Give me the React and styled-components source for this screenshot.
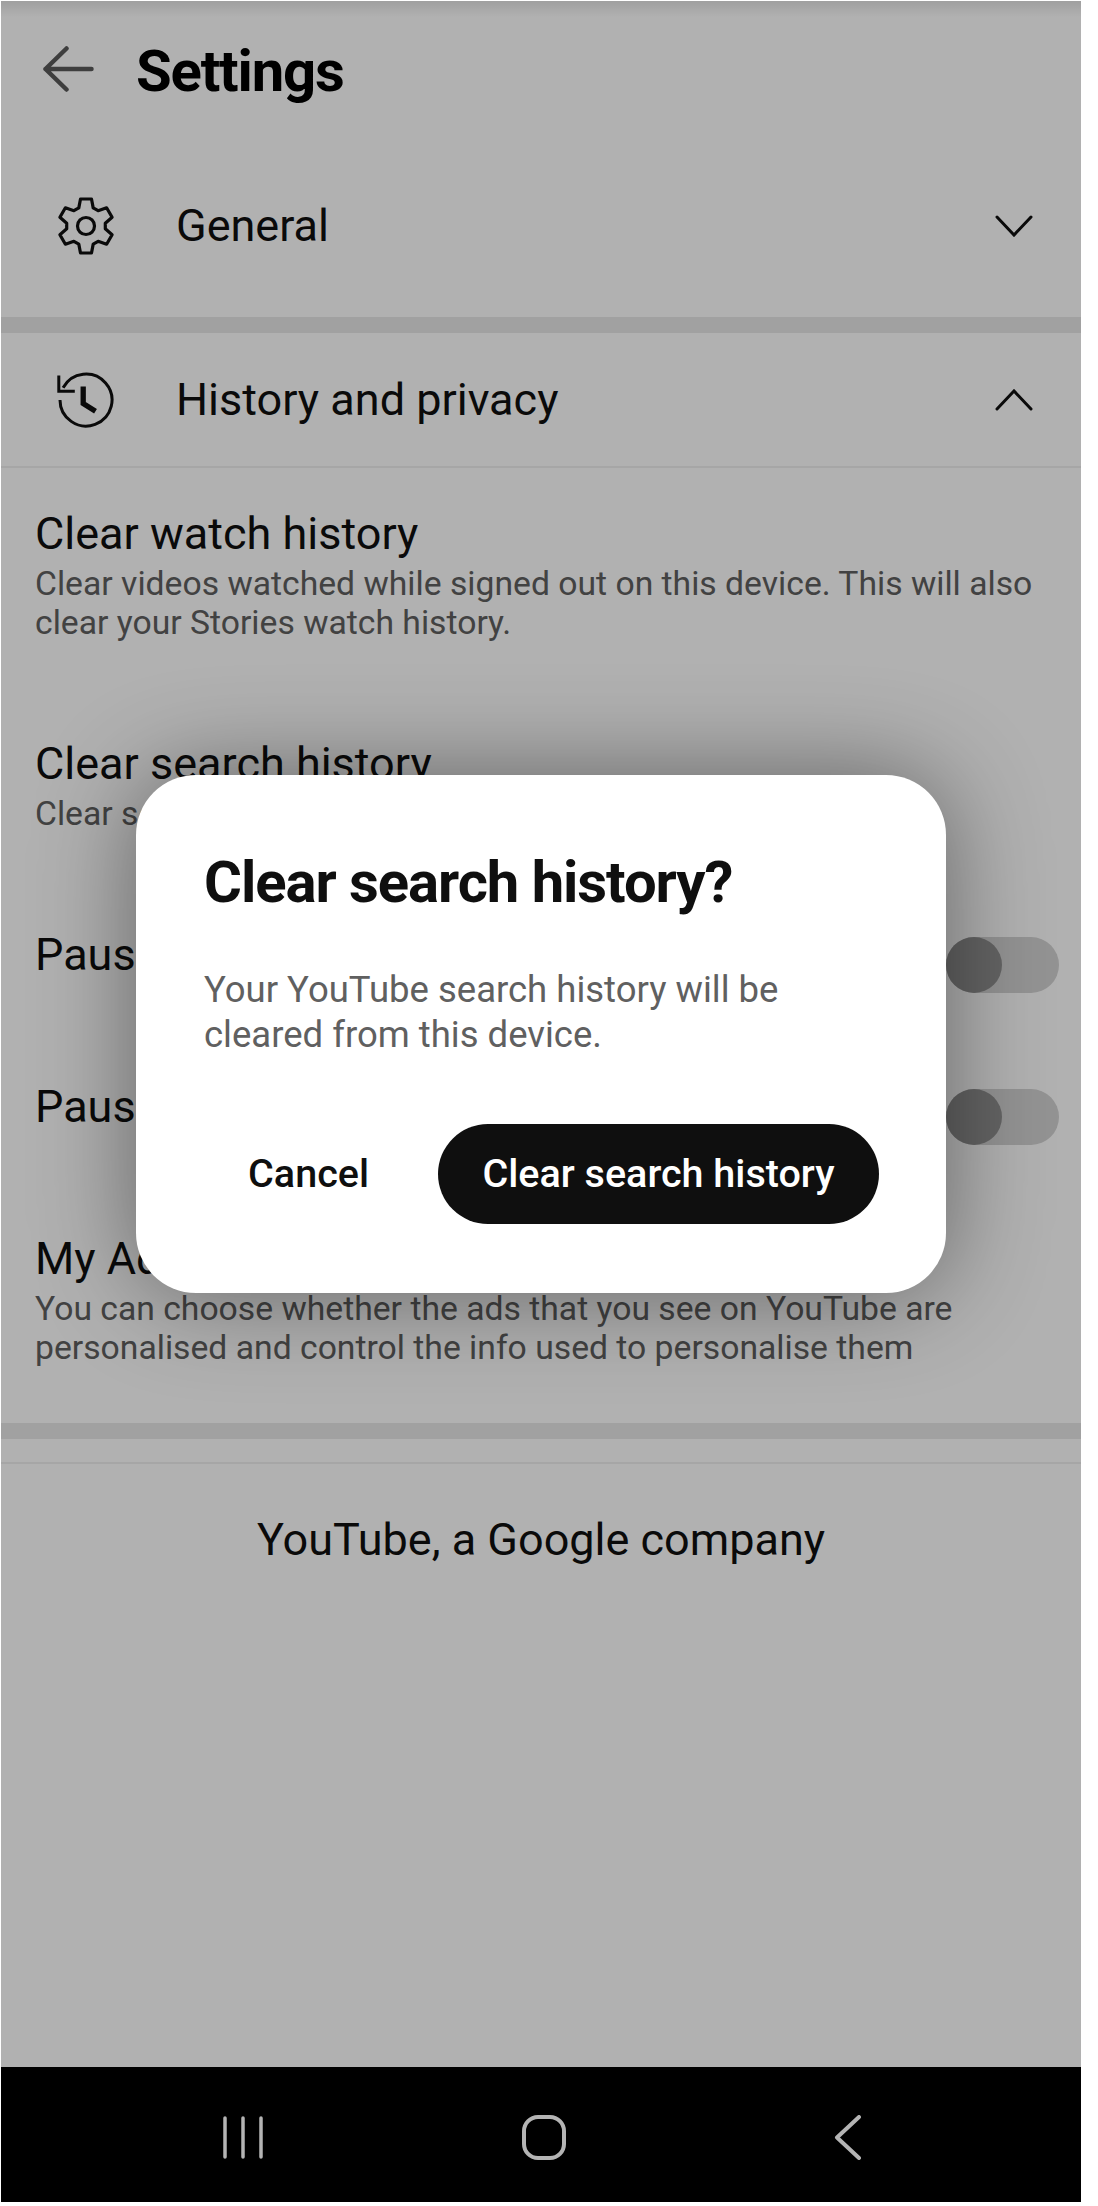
import React from "react";
import styled, { createGlobalStyle } from "styled-components";

const GlobalStyle = createGlobalStyle`
  html, body {
    margin: 0;
    padding: 0;
    background: #fff;
    font-family: Roboto, "Liberation Sans", sans-serif;
  }
`;

const Screen = styled.div`
  position: relative;
  width: 1080px;
  height: 2201px;
  margin: 1px 0 0 1px;
  background: #fff;
  display: flex;
  flex-direction: column;
  overflow: hidden;
  color: #0f0f0f;
`;

const Content = styled.div`
  flex: 1;
  position: relative;
  display: flex;
  flex-direction: column;
`;

const Header = styled.header`
  height: 157px;
  flex: none;
  display: flex;
  align-items: flex-start;
  padding-left: 42px;
  box-sizing: border-box;
`;

const BackButton = styled.div`
  width: 93px;
  padding-top: 45px;
  flex: none;
  line-height: 0;
`;

const PageTitle = styled.h1`
  margin: 0;
  padding-top: 34px;
  font-size: 58px;
  line-height: 72px;
  font-weight: 700;
  letter-spacing: -1.2px;
  color: #000;
`;

const Section = styled.div`
  height: 135px;
  flex: none;
  display: flex;
  align-items: center;
  padding: 0 48px 0 55px;
  box-sizing: border-box;
  margin-bottom: ${props => (props.$gap ? "24px" : "0")};
  border-bottom: ${props => (props.$line ? "2px solid #f0f0f0" : "none")};
`;

const SectionIcon = styled.div`
  width: 120px;
  flex: none;
  line-height: 0;
`;

const SectionLabel = styled.div`
  flex: 1;
  font-size: 45px;
  line-height: 52px;
`;

const Chevron = styled.div`
  line-height: 0;
`;

const Separator = styled.div`
  height: 16px;
  flex: none;
  background: #e8e8e8;
`;

const Row = styled.div`
  display: flex;
  align-items: center;
  box-sizing: border-box;
  padding: 0 22px 0 34px;
  min-height: ${props => (props.$toggle ? "152px" : "0")};
`;

const RowText = styled.div`
  flex: 1;
  align-self: flex-start;
  padding: 42px 0 ${props => (props.$toggle ? "0" : "56px")};
`;

const RowTitle = styled.div`
  font-size: 45px;
  line-height: 48px;
`;

const RowSub = styled.div`
  font-size: 33.7px;
  line-height: 39px;
  margin-top: 6px;
  color: #606060;
`;

const Toggle = styled.div`
  width: 113px;
  height: 56px;
  border-radius: 28px;
  background: #d4d4d4;
  flex: none;
`;

const Knob = styled.div`
  width: 56px;
  height: 56px;
  border-radius: 50%;
  background: #919191;
`;

const Footer = styled.div`
  margin-top: 23px;
  border-top: 2px solid #f0f0f0;
  padding-top: 50px;
  text-align: center;
  font-size: 45px;
  line-height: 52px;
`;

const Scrim = styled.div`
  position: absolute;
  inset: 0;
  background: rgba(0, 0, 0, 0.305);
  &::before {
    content: "";
    position: absolute;
    top: 0;
    left: 0;
    right: 0;
    height: 16px;
    background: linear-gradient(rgba(0, 0, 0, 0.1), rgba(0, 0, 0, 0));
  }
`;

const Dialog = styled.div`
  position: absolute;
  left: 135px;
  top: 774px;
  width: 810px;
  height: 518px;
  box-sizing: border-box;
  padding: 71px 68px 0;
  border-radius: 60px;
  background: #fff;
  box-shadow: 0 0 100px rgba(0, 0, 0, 0.44);
`;

const DialogTitle = styled.h2`
  margin: 0;
  font-size: 58px;
  line-height: 72px;
  font-weight: 700;
  letter-spacing: -1.05px;
`;

const DialogBody = styled.p`
  margin: 49px 0 0;
  font-size: 36.5px;
  line-height: 45px;
  color: #606060;
`;

const DialogActions = styled.div`
  display: flex;
  justify-content: flex-end;
  align-items: center;
  gap: 69px;
  margin-top: 67px;
  margin-right: -1px;
`;

const TextButton = styled.div`
  font-size: 39.5px;
  font-weight: 500;
  line-height: 100px;
`;

const PrimaryButton = styled.div`
  height: 100px;
  width: 441px;
  border-radius: 50px;
  background: #0f0f0f;
  color: #fff;
  font-size: 39.5px;
  font-weight: 500;
  line-height: 100px;
  text-align: center;
`;

const NavBar = styled.nav`
  height: 135px;
  flex: none;
  background: #000;
  position: relative;
  z-index: 1;
  display: flex;
  align-items: flex-start;
  padding: 48px 0 0 221px;
  box-sizing: border-box;
`;

const NavIcon = styled.div`
  line-height: 0;
  margin-left: ${props => props.$offset || 0}px;
`;

const toothShape = [
  [-0.38, 19.5],
  [-0.2, 27.5],
  [0.2, 27.5],
  [0.38, 19.5]
];

const gearPoints = () => {
  const pts = [];
  for (let i = 0; i < 6; i++) {
    const a = (i * Math.PI) / 3 - Math.PI / 2;
    toothShape.forEach(([da, r]) => {
      pts.push(`${(30 + r * Math.cos(a + da)).toFixed(1)},${(30 + r * Math.sin(a + da)).toFixed(1)}`);
    });
  }
  return pts.join(" ");
};

const ArrowIcon = () => (
  <svg width="52" height="46" viewBox="0 0 52 46" fill="none" stroke="#5a5a5a" strokeWidth="4.5" strokeLinecap="round" strokeLinejoin="round">
    <path d="M23.5 2.5 2.5 23 23.5 43.5M2.5 23H48.5" />
  </svg>
);

const GearIcon = () => (
  <svg width="60" height="60" viewBox="0 0 60 60" fill="none" stroke="#0f0f0f" strokeWidth="3.2" strokeLinejoin="round">
    <polygon points={gearPoints()} />
    <circle cx="30" cy="30" r="8.5" />
  </svg>
);

const ClockIcon = () => (
  <svg width="60" height="60" viewBox="0 0 60 60" fill="none" stroke="#0f0f0f">
    <path d="M7.1 17.7A26 26 0 1 1 4 30" strokeWidth="3" />
    <path d="M2.8 5.5V21.2H18.8" strokeWidth="3" />
    <path d="M27.2 16.5V33.5L39.5 41.2" strokeWidth="5.3" />
  </svg>
);

const ChevronIcon = ({ up }) => (
  <svg width="38" height="22" viewBox="0 0 38 22" fill="none" stroke="#0f0f0f" strokeWidth="3" strokeLinecap="round">
    <path d={up ? "M2 20 19 2 36 20" : "M2 2 19 20 36 2"} />
  </svg>
);

const RecentsIcon = () => (
  <svg width="42" height="44" viewBox="0 0 42 44" fill="none" stroke="#b4b4b4" strokeWidth="3.5" strokeLinecap="round">
    <path d="M3 3V42M21 3V42M39 3V42" />
  </svg>
);

const HomeIcon = () => (
  <svg width="44" height="45" viewBox="0 0 44 45" fill="none" stroke="#b4b4b4" strokeWidth="4">
    <rect x="2" y="2" width="40" height="41" rx="14" />
  </svg>
);

const BackIcon = () => (
  <svg width="28" height="45" viewBox="0 0 28 45" fill="none" stroke="#b4b4b4" strokeWidth="4" strokeLinecap="round" strokeLinejoin="round">
    <path d="M25 2 3 22.5 25 43" />
  </svg>
);

const SettingRow = ({ title, sub, toggle }) => (
  <Row $toggle={toggle}>
    <RowText $toggle={toggle}>
      <RowTitle>{title}</RowTitle>
      {sub && <RowSub>{sub}</RowSub>}
    </RowText>
    {toggle && (
      <Toggle>
        <Knob />
      </Toggle>
    )}
  </Row>
);

export default function App() {
  return (
    <Screen>
      <GlobalStyle />
      <Content>
        <Header>
          <BackButton>
            <ArrowIcon />
          </BackButton>
          <PageTitle>Settings</PageTitle>
        </Header>
        <Section $gap>
          <SectionIcon>
            <GearIcon />
          </SectionIcon>
          <SectionLabel>General</SectionLabel>
          <Chevron>
            <ChevronIcon />
          </Chevron>
        </Section>
        <Separator />
        <Section $line>
          <SectionIcon>
            <ClockIcon />
          </SectionIcon>
          <SectionLabel>History and privacy</SectionLabel>
          <Chevron>
            <ChevronIcon up />
          </Chevron>
        </Section>
        <SettingRow
          title="Clear watch history"
          sub="Clear videos watched while signed out on this device. This will also clear your Stories watch history."
        />
        <SettingRow title="Clear search history" sub="Clear search history from this device" />
        <SettingRow title="Pause watch history" toggle />
        <SettingRow title="Pause search history" toggle />
        <SettingRow
          title="My Ad Centre"
          sub="You can choose whether the ads that you see on YouTube are personalised and control the info used to personalise them"
        />
        <Separator />
        <Footer>YouTube, a Google company</Footer>
        <Scrim />
        <Dialog>
          <DialogTitle>Clear search history?</DialogTitle>
          <DialogBody>
            Your YouTube search history will be
            <br />
            cleared from this device.
          </DialogBody>
          <DialogActions>
            <TextButton>Cancel</TextButton>
            <PrimaryButton>Clear search history</PrimaryButton>
          </DialogActions>
        </Dialog>
      </Content>
      <NavBar>
        <NavIcon>
          <RecentsIcon />
        </NavIcon>
        <NavIcon $offset={258}>
          <HomeIcon />
        </NavIcon>
        <NavIcon $offset={268}>
          <BackIcon />
        </NavIcon>
      </NavBar>
    </Screen>
  );
}
